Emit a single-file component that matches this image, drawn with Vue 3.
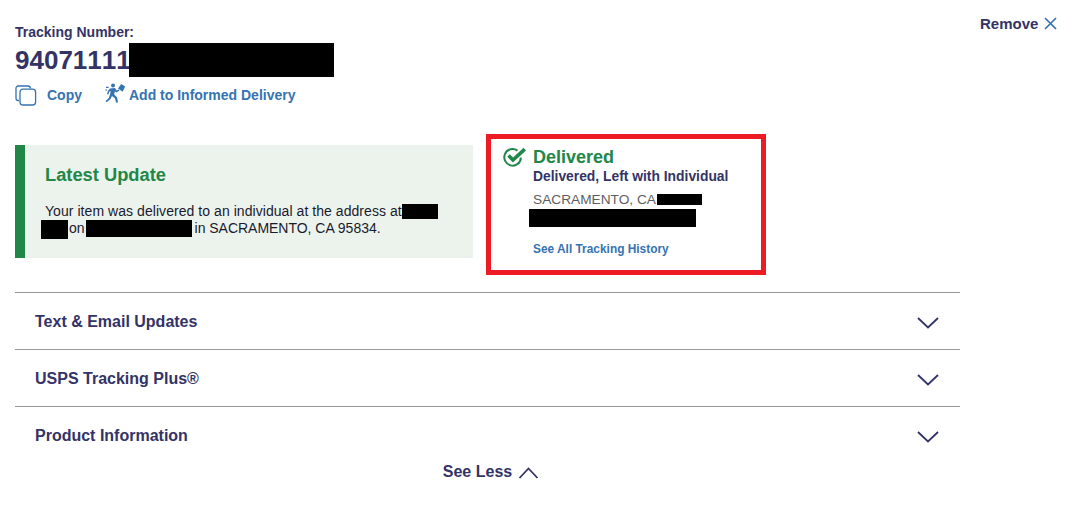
<template>
  <div class="page">
    <main class="main">
      <section class="head">
        <div class="label">Tracking Number:</div>
        <div class="number">94071111<span class="redact num-redact"></span></div>
        <div class="actions">
          <a class="action copy">
            <svg class="copy-icon" width="22" height="21" viewBox="0 0 22 21" fill="none" stroke="#3573b1" stroke-width="1.3">
              <path d="M4 15.5H3.2A2.2 2.2 0 0 1 1 13.3V3.2A2.2 2.2 0 0 1 3.2 1h9.6a2.8 2.8 0 0 1 2.7 2.5" />
              <rect x="5" y="4.2" width="15.6" height="15.8" rx="3" />
            </svg>
            <span>Copy</span>
          </a>
          <a class="action informed">
            <svg class="runner" width="21" height="21" viewBox="0 0 21 21" fill="#3573b1">
              <circle cx="8" cy="2.6" r="2" />
              <path d="M5 5.5l5-.6 1.6 2.6 2-1 .8 1.3-3.2 1.8-1.3-1.3-.8 3.3 2.9 2.6 1.1 5.3H11l-1-4.3-3-2.2-1.7 3.2-3.7 3-1-1.3 3.2-3 1.4-4.1.5-2.7-1.5.7-.8 2.7-1.5-.5 1.3-3.4z" />
              <path d="M13 5.4L16.2 1l4 2.6-2.6 5.2z" />
              <path d="M1 3.8h2.6V5H1zM.3 6.4h1.8v1.2H.3z" />
            </svg>
            <span>Add to Informed Delivery</span>
          </a>
        </div>
      </section>

      <section class="status">
        <div class="update">
          <h2 class="update-title">Latest Update</h2>
          <div class="update-text">
            <div class="line first">Your item was delivered to an individual at the address at<span class="redact r1"></span></div>
            <div class="line second"><span class="redact r2"></span><span class="on">on</span><span class="redact r3"></span><span class="in">in SACRAMENTO, CA 95834.</span></div>
          </div>
        </div>
        <div class="delivered">
          <div class="delivered-head">
            <svg width="24" height="21" viewBox="0 0 24 21" fill="none" stroke="#218748">
              <path d="M17.9 10.6a8.3 8.3 0 1 1-3.4-7" stroke-width="2" />
              <path d="M5.6 8.4l4.4 4.6L21.8 2.2" stroke-width="3.6" />
            </svg>
            <span class="delivered-title">Delivered</span>
          </div>
          <div class="delivered-sub">Delivered, Left with Individual</div>
          <div class="city">SACRAMENTO, CA<span class="redact r4"></span></div>
          <div class="redact r5"></div>
          <a class="history">See All Tracking History</a>
        </div>
      </section>

      <section class="rows">
        <div v-for="row in rows" :key="row" class="row">
          <span>{{ row }}</span>
          <svg width="22" height="12" viewBox="0 0 22 12" fill="none" stroke="#333366" stroke-width="1.8">
            <path d="M1 1l10 9.5L21 1" />
          </svg>
        </div>
      </section>

      <div class="less">
        <span>See Less</span>
        <svg width="21" height="13" viewBox="0 0 21 13" fill="none" stroke="#333366" stroke-width="1.8">
          <path d="M1.5 12L10.5 2.5 19.5 12" />
        </svg>
      </div>
    </main>

    <aside class="remove">
      <span>Remove</span>
      <svg width="13" height="13" viewBox="0 0 13 13" fill="none" stroke="#3573b1" stroke-width="1.7">
        <path d="M1 1l11 11M12 1L1 12" />
      </svg>
    </aside>
  </div>
</template>

<script setup>
const rows = ['Text & Email Updates', 'USPS Tracking Plus®', 'Product Information']
</script>

<style>
html, body {
  margin: 0;
  background: #fff;
}
</style>

<style scoped>
.page {
  display: flex;
  width: 1065px;
  height: 507px;
  overflow: hidden;
  box-sizing: border-box;
  padding-left: 15px;
  font-family: "Liberation Sans", Arial, sans-serif;
  color: #333366;
  background: #fff;
}
.main {
  width: 945px;
  flex: none;
}
.head {
  padding-top: 25px;
}
.label {
  font-size: 14px;
  line-height: 15px;
  font-weight: 700;
}
.number {
  display: flex;
  align-items: center;
  height: 34px;
  margin-top: 3px;
  font-size: 26px;
  font-weight: 700;
  font-kerning: none;
}
.redact {
  display: inline-block;
  background: #000;
}
.num-redact {
  width: 205px;
  height: 34px;
  margin-left: -2px;
}
.actions {
  display: flex;
  align-items: center;
  height: 24px;
  margin-top: 6px;
  font-size: 14px;
  font-weight: 700;
  color: #3573b1;
}
.action {
  display: flex;
  align-items: center;
}
.copy-icon {
  margin-right: 10px;
}
.copy {
  width: 90px;
}
.runner {
  margin-right: 3px;
  margin-top: -4px;
}
.status {
  display: flex;
  align-items: flex-start;
  margin-top: 27px;
}
.update {
  width: 458px;
  height: 113px;
  margin-top: 11px;
  box-sizing: border-box;
  padding: 20px 0 0 20px;
  border-left: 10px solid #218748;
  background: #ecf3ed;
  color: #1a1a2e;
}
.update-title {
  margin: 0;
  font-size: 18.3px;
  line-height: 20px;
  font-weight: 700;
  color: #218748;
}
.update-text {
  margin-top: 18px;
  font-size: 14px;
  line-height: 17px;
}
.line {
  display: flex;
  align-items: center;
  height: 17px;
  white-space: nowrap;
}
.first {
  letter-spacing: 0.055px;
}
.second {
  margin-left: -4px;
  letter-spacing: -0.02px;
}
.r1 {
  width: 36px;
  height: 15px;
}
.r2 {
  width: 27px;
  height: 19px;
  margin-top: 2px;
}
.on {
  margin: 0 1px 0 1px;
}
.r3 {
  width: 106px;
  height: 17px;
}
.in {
  margin-left: 3px;
}
.delivered {
  width: 280px;
  height: 141px;
  margin-left: 13px;
  box-sizing: border-box;
  border: 5px solid #ed1c24;
  padding: 6px 0 0 42px;
  position: relative;
}
.delivered-head {
  display: flex;
  align-items: center;
  height: 24px;
  margin-left: -30px;
}
.delivered-head svg {
  margin-right: 6px;
}
.delivered-title {
  font-size: 18px;
  font-weight: 700;
  color: #218748;
}
.delivered-sub {
  margin-top: -1px;
  font-size: 13.85px;
  line-height: 16px;
  font-weight: 700;
}
.city {
  display: flex;
  align-items: center;
  height: 17px;
  margin-top: 7px;
  font-size: 13.7px;
  color: #5e5e5e;
}
.r4 {
  width: 45px;
  height: 11px;
  margin-left: 1px;
}
.r5 {
  display: block;
  width: 167px;
  height: 18px;
  margin: 1px 0 0 -4px;
}
.history {
  display: block;
  margin-top: 15px;
  font-size: 11.9px;
  line-height: 14px;
  font-weight: 700;
  color: #3573b1;
}
.rows {
  margin-top: 17px;
}
.row {
  display: flex;
  align-items: center;
  justify-content: space-between;
  box-sizing: border-box;
  height: 57px;
  border-top: 1px solid #999;
  padding: 2px 21px 0 20px;
  font-size: 16px;
  font-weight: 700;
}
.row svg {
  margin-top: 2px;
}
.less {
  display: flex;
  justify-content: center;
  align-items: center;
  gap: 6px;
  margin-top: -1px;
  padding-left: 7px;
  height: 20px;
  font-size: 16px;
  font-weight: 700;
}
.remove {
  display: flex;
  align-items: center;
  gap: 6px;
  height: 16px;
  margin: 15px 0 0 20px;
  font-size: 15px;
  font-weight: 700;
  white-space: nowrap;
}
</style>
